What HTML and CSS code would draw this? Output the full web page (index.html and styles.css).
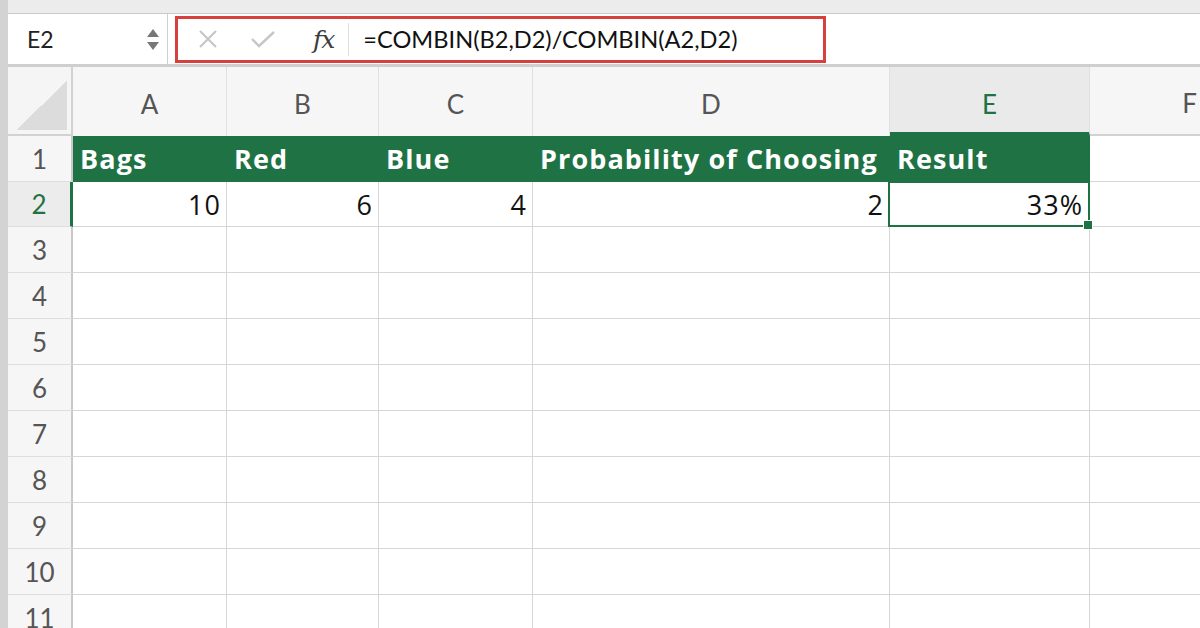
FILE: index.html
```html
<!DOCTYPE html>
<html lang="en">
<head>
    <meta charset="UTF-8">
    <meta name="viewport" content="width=device-width, initial-scale=1.0">
    <title>COMBIN probability</title>

    <link rel="stylesheet" href="styles.css">

</head>
<body>

    <div class="window">

        <div class="top-band"></div>

        <div class="formula-bar">
            <div class="name-box">
                <span class="name-box-text">E2</span>
                <div class="spinner">
                    <span class="spin-up"></span>
                    <span class="spin-down"></span>
                </div>
            </div>
            <div class="formula-box">
                <div class="formula-icons">
                    <svg class="icon-cancel" width="22" height="22" viewBox="0 0 22 22">
                        <path d="M3 3 L19 19 M19 3 L3 19" stroke="#c6c6c6" stroke-width="2.2" fill="none"/>
                    </svg>
                    <svg class="icon-enter" width="28" height="22" viewBox="0 0 28 22">
                        <path d="M3 11 L10 18 L25 4" stroke="#c6c6c6" stroke-width="2.4" fill="none"/>
                    </svg>
                    <span class="fx">fx</span>
                </div>
                <div class="formula-text">=COMBIN(B2,D2)/COMBIN(A2,D2)</div>
            </div>
        </div>

        <div class="sheet">
            <!-- column headers -->
            <div class="corner"><div class="corner-triangle"></div></div>
            <div class="col-head">A</div>
            <div class="col-head">B</div>
            <div class="col-head">C</div>
            <div class="col-head">D</div>
            <div class="col-head col-active">E</div>
            <div class="col-head col-last">F</div>

            <!-- row 1 -->
            <div class="row-head">1</div>
            <div class="cell head-cell">Bags</div>
            <div class="cell head-cell">Red</div>
            <div class="cell head-cell">Blue</div>
            <div class="cell head-cell">Probability of Choosing</div>
            <div class="cell head-cell">Result</div>
            <div class="cell"></div>

            <!-- row 2 -->
            <div class="row-head row-active">2</div>
            <div class="cell num">10</div>
            <div class="cell num">6</div>
            <div class="cell num">4</div>
            <div class="cell num">2</div>
            <div class="cell num selected">33%<span class="fill-handle"></span></div>
            <div class="cell"></div>

            <div class="row-head">3</div>
            <div class="cell"></div><div class="cell"></div><div class="cell"></div><div class="cell"></div><div class="cell"></div><div class="cell"></div>
            <div class="row-head">4</div>
            <div class="cell"></div><div class="cell"></div><div class="cell"></div><div class="cell"></div><div class="cell"></div><div class="cell"></div>
            <div class="row-head">5</div>
            <div class="cell"></div><div class="cell"></div><div class="cell"></div><div class="cell"></div><div class="cell"></div><div class="cell"></div>
            <div class="row-head">6</div>
            <div class="cell"></div><div class="cell"></div><div class="cell"></div><div class="cell"></div><div class="cell"></div><div class="cell"></div>
            <div class="row-head">7</div>
            <div class="cell"></div><div class="cell"></div><div class="cell"></div><div class="cell"></div><div class="cell"></div><div class="cell"></div>
            <div class="row-head">8</div>
            <div class="cell"></div><div class="cell"></div><div class="cell"></div><div class="cell"></div><div class="cell"></div><div class="cell"></div>
            <div class="row-head">9</div>
            <div class="cell"></div><div class="cell"></div><div class="cell"></div><div class="cell"></div><div class="cell"></div><div class="cell"></div>
            <div class="row-head">10</div>
            <div class="cell"></div><div class="cell"></div><div class="cell"></div><div class="cell"></div><div class="cell"></div><div class="cell"></div>
            <div class="row-head">11</div>
            <div class="cell"></div><div class="cell"></div><div class="cell"></div><div class="cell"></div><div class="cell"></div><div class="cell"></div>
        </div>

    </div>

</body>
</html>
```

FILE: styles.css
```css
:root {
    --grid-line: #d6d6d6;
    --excel-green: #1f7244;
    --head-text: #555555;
}

*, *::before, *::after {
    margin: 0;
    padding: 0;
    box-sizing: border-box;
}

body {
    width: 1200px;
    height: 628px;
    overflow: hidden;
    background-color: white;
    font-family: Lato, "Open Sans", sans-serif;
}

.window {
    height: 628px;
    overflow: hidden;
    border-left: 8px solid #d3d3d3;
}

.top-band {
    height: 14px;
    background-color: #ececec;
    border-bottom: 1px solid #c9c9c9;
}

/* name box + formula */
.formula-bar {
    height: 53px;
    display: flex;
    align-items: center;
    border-bottom: 3px solid #cfcfcf;
    background-color: white;
}

.name-box {
    width: 160px;
    height: 100%;
    display: flex;
    align-items: center;
    justify-content: space-between;
    padding: 0 8px 0 19px;
    border-right: 1px solid #cfcfcf;
}

.name-box-text {
    font-size: 23px;
    color: #222;
}

.spinner {
    display: flex;
    flex-direction: column;
    gap: 5px;
}

.spin-up, .spin-down {
    width: 0;
    height: 0;
    border-left: 6px solid transparent;
    border-right: 6px solid transparent;
}

.spin-up {
    border-bottom: 8px solid #777;
}

.spin-down {
    border-top: 8px solid #777;
}

.formula-box {
    margin-left: 7px;
    width: 651px;
    height: 47px;
    border: 3px solid #d6403d;
    display: flex;
    align-items: center;
}

.formula-icons {
    display: flex;
    align-items: center;
    height: 33px;
    padding-left: 19px;
    border-right: 1px solid #dedede;
}

.icon-cancel {
    margin-right: 30px;
}

.fx {
    margin-left: 36px;
    margin-right: 14px;
    font-family: "DejaVu Serif", "Liberation Serif", serif;
    font-style: italic;
    font-size: 25px;
    color: #3c3c3c;
    letter-spacing: -1px;
}

.formula-text {
    padding-left: 14px;
    font-size: 23.6px;
    color: #111;
}

/* grid */
.sheet {
    display: grid;
    grid-template-columns: 65px 154px 152px 154px 357px 200px 200px;
    grid-template-rows: 69px 46px 45px repeat(9, 46px);
}

.corner {
    background-color: #f5f5f5;
    border-right: 2px solid #d2d2d2;
    border-bottom: 2px solid #d2d2d2;
    padding: 14px 4px 4px 8px;
}

.corner-triangle {
    width: 100%;
    height: 100%;
    background: linear-gradient(to bottom right, transparent 50%, #dcdcdc 50%);
}

.col-head {
    background-color: #f6f6f6;
    border-right: 1px solid #e0e0e0;
    display: flex;
    align-items: center;
    justify-content: center;
    padding-top: 4px;
    font-size: 26px;
    color: var(--head-text);
}

.col-active {
    background-color: #eaeaea;
    color: var(--excel-green);
    border-bottom: 4px solid var(--excel-green);
    padding-top: 8px;
}

.col-last {
    border-bottom: 2px solid #d2d2d2;
}

.row-head {
    background-color: #f6f6f6;
    border-right: 2px solid #c9c9c9;
    border-bottom: 1px solid #dedede;
    display: flex;
    align-items: center;
    justify-content: center;
    font-size: 26px;
    color: var(--head-text);
}

.row-active {
    color: var(--excel-green);
    background-color: #ececec;
    border-right: 3px solid var(--excel-green);
}

.cell {
    border-right: 1px solid var(--grid-line);
    border-bottom: 1px solid var(--grid-line);
    display: flex;
    align-items: center;
    padding: 0 5px 0 7px;
    font-family: "Open Sans", Lato, sans-serif;
    font-size: 27px;
    letter-spacing: 1px;
    color: #111;
    position: relative;
}

.head-cell {
    background-color: var(--excel-green);
    border-color: var(--excel-green);
    color: white;
    font-weight: 700;
    font-size: 27px;
    letter-spacing: 1.1px;
}

.num {
    justify-content: flex-end;
}

.selected {
    z-index: 2;
    border: 2px solid var(--excel-green);
    margin: -1px 0 0 -2px;
}

.fill-handle {
    position: absolute;
    right: -5px;
    bottom: -5px;
    width: 10px;
    height: 10px;
    background-color: var(--excel-green);
    border: 1px solid white;
}
```
